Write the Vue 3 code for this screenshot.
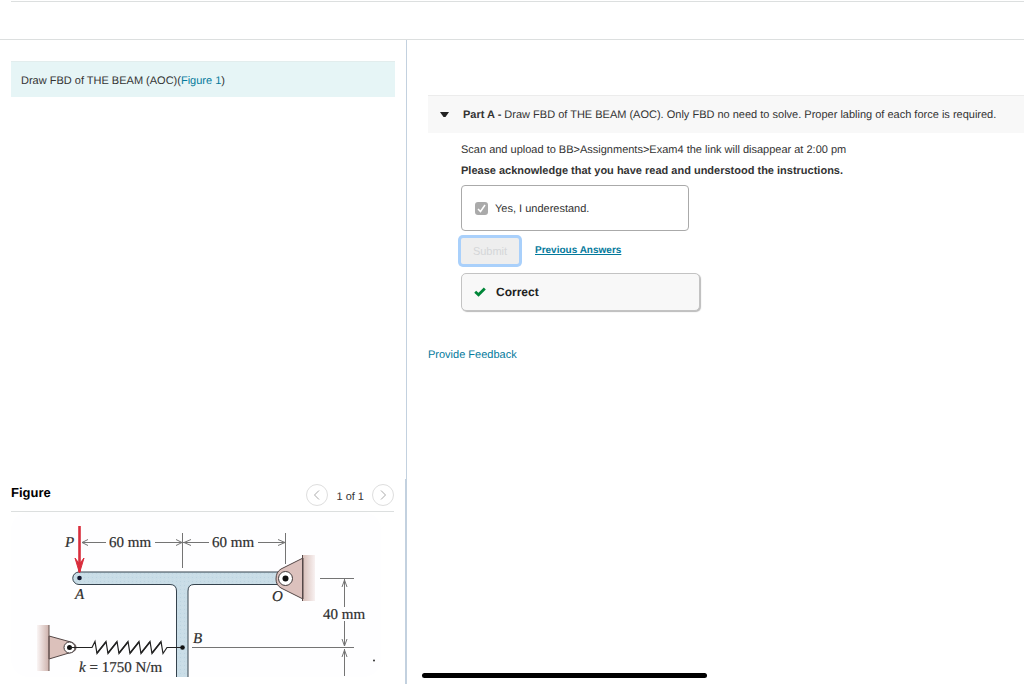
<script setup>
import { ref } from 'vue'

const understood = ref(true)
const open = ref(true)
</script>

<template>
  <div class="page">
    <header class="topbar"></header>
    <main class="columns">
      <aside class="left">
        <section class="prompt">Draw FBD of THE BEAM (AOC)(<a href="#figure">Figure 1</a>)</section>
        <section id="figure" class="figure">
          <div class="figure-head">
            <h2>Figure</h2>
            <nav class="pager" aria-label="Figures">
              <button type="button" aria-label="Previous figure">
                <svg viewBox="0 0 22 22" width="22" height="22"><path d="M13 6.5 8.5 11l4.500 4.500" /></svg>
              </button>
              <span>1 of 1</span>
              <button type="button" aria-label="Next figure">
                <svg viewBox="0 0 22 22" width="22" height="22"><path d="M9 6.500 13.500 11 9 15.500" /></svg>
              </button>
            </nav>
          </div>
          <svg class="diagram" viewBox="0 0 383 172" role="img" aria-label="Beam AOC with spring">
            <defs>
              <linearGradient id="wallRight" x1="0" x2="1">
                <stop offset="0" stop-color="#d9c0ba" /><stop offset="1" stop-color="#f8f1f1" />
              </linearGradient>
              <linearGradient id="wallLeft" x1="0" x2="1">
                <stop offset="0" stop-color="#faf5f5" /><stop offset="1" stop-color="#cdb1ab" />
              </linearGradient>
              <pattern id="grain" width="4" height="4" patternUnits="userSpaceOnUse">
                <rect width="4" height="4" fill="#c9dde7" />
                <rect x="1" y="1" width="1" height="1" fill="#bdd4e0" />
                <rect x="3" y="3" width="1" height="1" fill="#d0e0e8" />
              </pattern>
              <clipPath id="sheet"><rect width="383" height="165" /></clipPath>
            </defs>
            <g clip-path="url(#sheet)">
              <rect x="0" y="0" width="370" height="165" rx="18" fill="#fefeff" />
              <!-- beam with its vertical arm -->
              <path d="M68 60H278V72.500H183Q177 72.500 177 79V180H165.500V79Q165.500 72.500 159 72.500H68A6.250 6.250 0 0 1 68 60Z" fill="url(#grain)" stroke="#34424d" />
              <!-- right support -->
              <rect x="292" y="43" width="12" height="46" fill="url(#wallRight)" />
              <path d="M292 46 270 57Q265 60 265 67Q265 73 270 76L292 87Z" fill="#dcc1bd" stroke="#544746" />
              <path d="M291.500 43V89" stroke="#554848" />
              <circle cx="274.500" cy="66.500" r="7" fill="#fff" stroke="#41393a" />
              <circle cx="274.500" cy="66.500" r="3" fill="#111" />
              <!-- left support -->
              <rect x="26" y="113" width="12" height="46" fill="url(#wallLeft)" />
              <path d="M38 124 58 129.500Q65 131 65 135.500Q65 140 58 141L38 147Z" fill="#dcc1bb" stroke="#544746" />
              <path d="M38 113V159" stroke="#64534f" />
              <circle cx="58.500" cy="135.500" r="5.500" fill="#fff" stroke="#41393a" />
              <circle cx="58.500" cy="135.500" r="2.500" fill="#111" />
              <!-- spring -->
              <path d="M59 135.500H81L84 129.500 86 141.500 95 129.500 97 141.500 106 129.500 108 141.500 117 129.500 119 141.500 128 129.500 130 141.500 139 129.500 141 141.500 150 129.500 152 141.500 156 135.500H171" fill="none" stroke="#222" stroke-width="1.200" />
              <path d="M86 141 95 130M97 141 106 130M108 141 117 130M119 141 128 130M130 141 139 130M141 141 150 130" stroke="#222" stroke-width="1.600" />
              <circle cx="171.500" cy="135.500" r="2.300" fill="#111" />
              <circle cx="68.500" cy="66" r="2.300" fill="#111830" />
              <!-- load -->
              <path d="M68.500 14V60" stroke="#d92d3c" stroke-width="2.600" />
              <path d="M64 46 68.500 61 73 46 68.500 52Z" fill="#d92d3c" stroke="#d92d3c" />
              <!-- dimension lines -->
              <g fill="none" stroke="#747474">
                <path d="M71 30.500H95M144 30.500H198M247 30.500H274M171.500 21V56M274.500 21V52" />
                <path d="M77 27.500 71 30.500 77 33.500M165 27.500 171 30.500 165 33.500M180 27.500 173 30.500 180 33.500M267 27.500 274 30.500 267 33.500" />
                <path d="M309 66.500H343M181 135.500H343M333.500 67V95M333.500 109V134M333.500 137V164" />
                <path d="M331 75 333.500 68 336 75M331 127 333.500 134 336 127M331 145 333.500 138 336 145" />
              </g>
              <g class="labels">
                <text x="98" y="35">60 mm</text>
                <text x="201" y="35">60 mm</text>
                <text x="312" y="107">40 mm</text>
                <text x="68" y="160"><tspan class="sym">k</tspan> = 1750 N/m</text>
                <g class="sym">
                  <text x="54" y="35">P</text>
                  <text x="64" y="87">A</text>
                  <text x="261" y="89">O</text>
                  <text x="182" y="131">B</text>
                </g>
              </g>
              <circle cx="363" cy="148.500" r="1" fill="#333" />
            </g>
          </svg>
        </section>
      </aside>

      <section class="right">
        <div class="part">
          <button class="toggle" type="button" aria-label="Toggle Part A" :aria-expanded="open" @click="open = !open">
            <svg viewBox="0 0 10 6" width="10" height="6"><path d="M0 0H9L5.500 5H3.500Z" fill="#222" /></svg>
          </button>
          <p><b>Part A - </b>Draw FBD of THE BEAM (AOC). Only FBD no need to solve. Proper labling of each force is required.</p>
        </div>
        <form v-show="open" class="body" @submit.prevent>
          <p>Scan and upload to BB&gt;Assignments&gt;Exam4 the link will disappear at 2:00 pm</p>
          <p class="strong">Please acknowledge that you have read and understood the instructions.</p>
          <div class="choice">
            <input id="ack" v-model="understood" type="checkbox" disabled />
            <svg class="tick" viewBox="0 0 13 13" width="13" height="13"><path d="M3 7 5.500 9.500 10 3" /></svg>
            <label for="ack">Yes, I underestand.</label>
          </div>
          <div class="actions">
            <button class="submit" type="submit" disabled>Submit</button>
            <a href="#answers">Previous Answers</a>
          </div>
          <div class="result">
            <svg viewBox="0 0 12 10" width="12" height="10"><path d="M1.200 4.800 4.500 7.800 10.800 1.500" fill="none" stroke="#008638" stroke-width="2.800" /></svg>
            <span>Correct</span>
          </div>
        </form>
        <a class="feedback" href="#feedback">Provide Feedback</a>
        <div class="scroll-thumb"></div>
      </section>
    </main>
  </div>
</template>

<style>
body {
  margin: 0;
  background: #fff;
}
</style>

<style scoped>
* {
  box-sizing: border-box;
}
.page {
  display: flex;
  flex-direction: column;
  min-height: 100vh;
  overflow: hidden;
  font: 11px/14px "Liberation Sans", Arial, sans-serif;
  text-rendering: geometricPrecision;
  color: #333;
}
.topbar {
  height: 40px;
  padding: 1px 0 0 11px;
  border-bottom: 1px solid #dcdfdf;
}
.topbar::before {
  content: "";
  display: block;
  border-top: 1px solid #dcdfdf;
}
.columns {
  display: flex;
  flex: 1;
}
.left {
  display: flex;
  flex: 0 0 407px;
  flex-direction: column;
  justify-content: space-between;
  min-width: 0;
  padding-top: 21px;
  border-right: 1px solid #c3d1df;
}
a {
  color: #047a9c;
  text-decoration: none;
}
.prompt {
  margin: 0 11px;
  padding: 12px 10px 9px;
  border-top: 1px solid #e2eded;
  background: #e6f5f6;
}
.figure {
  padding: 0 11px;
  border-right: 1px solid #c3d1df;
}
.figure-head {
  display: flex;
  align-items: center;
  justify-content: space-between;
  height: 33px;
  border-bottom: 1px solid #dcdfdf;
}
h2 {
  margin: 0 0 5px;
  font-size: 13px;
  line-height: 16px;
  color: #000;
}
.pager {
  display: flex;
  align-items: center;
  gap: 8px;
}
.pager span {
  padding-top: 4px;
}
.pager button {
  width: 22px;
  height: 22px;
  padding: 0;
  border: 1px solid #dedede;
  border-radius: 50%;
  background: #fff;
}
.pager svg {
  display: block;
  margin: -1px;
}
.pager path {
  fill: none;
  stroke: #aaa;
}
.diagram {
  display: block;
  width: 100%;
}
.labels {
  font: 15px "Liberation Serif", "Times New Roman", serif;
  fill: #2d2d2d;
  stroke: #2d2d2d;
  stroke-width: 0.2px;
}
.sym {
  font-style: italic;
}
.right {
  display: flex;
  flex: 1;
  flex-direction: column;
  min-width: 0;
  padding: 55px 0 6px 21px;
}
.part {
  display: flex;
  align-items: center;
  min-height: 38px;
  border-top: 1px solid #ececec;
  background: #f8f8f8;
}
p {
  margin: 0;
}
.toggle {
  display: flex;
  flex: none;
  width: 35px;
  padding: 0 0 0 12px;
  border: 0;
  background: none;
}
.body {
  padding: 10px 0 0 33px;
}
.strong {
  margin: 7px 0;
  font-weight: bold;
}
.choice {
  position: relative;
  display: flex;
  align-items: center;
  gap: 7px;
  width: 228px;
  height: 46px;
  padding: 0 13px;
  border: 1px solid #aaa;
  border-radius: 4px;
}
.choice input {
  width: 13px;
  height: 13px;
  margin: 0;
  border-radius: 3px;
  appearance: none;
  background: #aaa;
}
.choice label {
  padding-top: 2px;
}
.tick {
  position: absolute;
  left: 13px;
}
.tick path {
  fill: none;
  stroke: #fff;
  stroke-width: 1.500;
}
.actions {
  display: flex;
  align-items: center;
  gap: 16px;
  margin-top: 7px;
}
.submit {
  width: 58px;
  height: 26px;
  padding: 0;
  border: 0;
  border-radius: 2px;
  background: #eee;
  box-shadow: 0 0 0 3px #a9d0fb;
  font: inherit;
  color: #d4d6d8;
}
.actions a {
  font-size: 10px;
  font-weight: bold;
  text-decoration: underline;
}
.result {
  display: flex;
  align-items: center;
  gap: 10px;
  width: 239px;
  height: 38px;
  margin-top: 9px;
  padding: 0 12px;
  border: 1px solid #c3c3c3;
  border-radius: 5px;
  background: #f8f8f8;
  box-shadow: 1px 1px 1px #bbb;
  font-size: 12px;
  font-weight: bold;
  color: #222;
}
.feedback {
  align-self: flex-start;
  margin-top: 37px;
}
.scroll-thumb {
  width: 285px;
  height: 5px;
  margin: auto 0 0 -6px;
  border-radius: 3px;
  background: #000;
}
</style>
